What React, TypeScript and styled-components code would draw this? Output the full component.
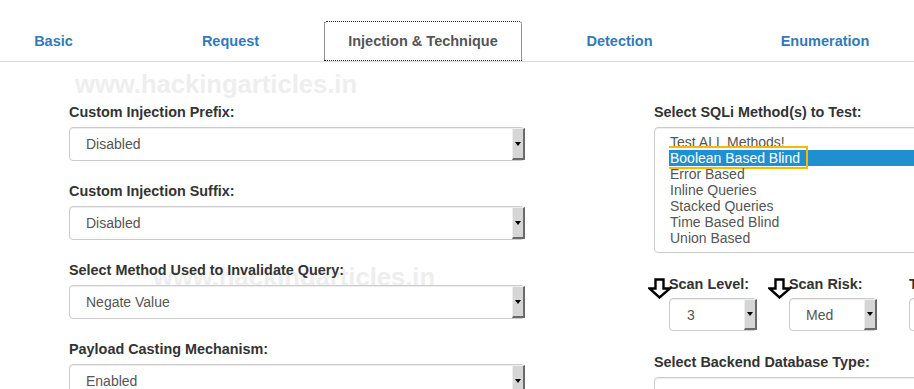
import React from 'react';
import styled, { createGlobalStyle } from 'styled-components';

const Global = createGlobalStyle`
  html, body { margin: 0; padding: 0; background: #fff; overflow: hidden; }
  body { font-family: "Liberation Sans", Arial, Helvetica, sans-serif; font-size: 14px; color: #333; }
  * { box-sizing: border-box; }
`;

const Page = styled.div`
  position: relative;
  width: 914px;
  height: 389px;
  overflow: hidden;
`;

const Watermark = styled.div<{ $x: number; $y: number }>`
  position: absolute;
  left: ${p => p.$x}px;
  top: ${p => p.$y}px;
  font-size: 25.6px;
  line-height: 26px;
  font-weight: bold;
  color: #eeeeee;
  white-space: nowrap;
  z-index: 0;
  pointer-events: none;
`;

const Nav = styled.ul`
  position: relative;
  z-index: 1;
  display: flex;
  margin: 0;
  padding: 21px 0 0;
  list-style: none;
  border-bottom: 1px solid #ddd;
  height: 62px;
`;

const Tab = styled.li<{ $w: number; $shift?: number }>`
  flex: 0 0 ${p => p.$w}px;
  display: flex;
  justify-content: center;
  padding-right: ${p => p.$shift ?? 0}px;
`;

const TabLink = styled.a<{ $active?: boolean }>`
  display: flex;
  align-items: center;
  justify-content: center;
  width: ${p => (p.$active ? '100%' : 'auto')};
  height: 40px;
  font-weight: bold;
  font-size: 14.5px;
  line-height: 20px;
  color: ${p => (p.$active ? '#555' : '#337ab7')};
  border: ${p => (p.$active ? '1px dotted #222' : '1px solid transparent')};
  border-radius: 3px 3px 0 0;
  text-decoration: none;
  white-space: nowrap;
`;

const Content = styled.div`
  position: relative;
  z-index: 1;
  display: flex;
  gap: 129px;
  padding: 40px 0 0 69px;
`;

const LeftCol = styled.div`
  flex: 0 0 456px;
`;

const RightCol = styled.div`
  flex: 0 0 320px;
`;

const Field = styled.div`
  margin-bottom: 20px;
`;

const Label = styled.label`
  display: block;
  font-weight: bold;
  font-size: 14.4px;
  line-height: 20px;
  margin-bottom: 5px;
  color: #333;
  white-space: nowrap;
`;

const SelectBox = styled.div<{ $w?: number; $h?: number }>`
  display: flex;
  width: ${p => (p.$w ? `${p.$w}px` : '100%')};
  height: ${p => p.$h ?? 34}px;
  border: 1px solid #ccc;
  border-radius: 4px;
  background: #fff;
  box-shadow: inset 0 1px 1px rgba(0, 0, 0, 0.075);
`;

const Value = styled.div<{ $pad?: number }>`
  flex: 1;
  padding-left: ${p => p.$pad ?? 16}px;
  display: flex;
  align-items: center;
  color: #555;
  font-size: 14px;
`;

const ArrowBtn = styled.div`
  flex: 0 0 13px;
  margin-right: -1px;
  display: flex;
  align-items: center;
  justify-content: center;
  background: #d6d6d6;
  border-top: 1px solid #eeeeee;
  border-left: 1px solid #eeeeee;
  border-right: 2px solid #6a6a6a;
  border-bottom: 2px solid #6a6a6a;
`;

const Caret = styled.span`
  width: 0;
  height: 0;
  border-left: 3px solid transparent;
  border-right: 3px solid transparent;
  border-top: 4px solid #000;
`;

const ListBox = styled.div`
  width: 100%;
  height: 126px;
  border: 1px solid #ccc;
  border-radius: 4px;
  box-shadow: inset 0 1px 1px rgba(0, 0, 0, 0.075);
  padding: 9px 0 0 14px;
  overflow: hidden;
`;

const ListClip = styled.div`
  height: 110px;
  overflow: hidden;
`;

const OptionList = styled.div`
  margin-top: -3px;
`;

const Option = styled.div<{ $selected?: boolean }>`
  position: relative;
  line-height: 16px;
  height: 16px;
  padding-left: 1px;
  font-size: 14px;
  white-space: nowrap;
  color: ${p => (p.$selected ? '#fff' : '#555')};
  background: ${p => (p.$selected ? '#1f8fd0' : 'transparent')};
`;

const Mark = styled.span`
  position: absolute;
  left: -2px;
  top: -4px;
  width: 141px;
  height: 23px;
  border: 2px solid #f5b900;
  pointer-events: none;
`;

const ScanRow = styled.div`
  display: flex;
  padding-left: 15px;
  margin-top: 21px;
`;

const ScanCol = styled.div`
  position: relative;
  flex: 0 0 120px;
`;

const ScanLabel = styled(Label)`
  margin-bottom: 4px;
`;

const ArrowMark = styled.svg`
  position: absolute;
  left: -21px;
  top: 4px;
`;

const BackendField = styled.div`
  margin-top: 21px;
`;

const Arrow = () => (
  <ArrowMark width="24" height="21" viewBox="0 0 24 21">
    <path
      d="M7.5 1.5 H15.5 V10.5 H22 L11.5 19.5 L1.5 10.5 H7.5 Z"
      fill="#fff"
      stroke="#000"
      strokeWidth="2.4"
      strokeLinejoin="miter"
    />
  </ArrowMark>
);

const Select = ({ value, w, h, pad }: { value: string; w?: number; h?: number; pad?: number }) => (
  <SelectBox $w={w} $h={h}>
    <Value $pad={pad}>{value}</Value>
    <ArrowBtn>
      <Caret />
    </ArrowBtn>
  </SelectBox>
);

const tabs = [
  { label: 'Basic', w: 137, shift: 30 },
  { label: 'Request', w: 187 },
  { label: 'Injection & Technique', w: 198, active: true },
  { label: 'Detection', w: 195 },
  { label: 'Enumeration', w: 216 },
];

const leftFields = [
  { label: 'Custom Injection Prefix:', value: 'Disabled' },
  { label: 'Custom Injection Suffix:', value: 'Disabled' },
  { label: 'Select Method Used to Invalidate Query:', value: 'Negate Value' },
  { label: 'Payload Casting Mechanism:', value: 'Enabled' },
];

const methods = [
  'Test ALL Methods!',
  'Boolean Based Blind',
  'Error Based',
  'Inline Queries',
  'Stacked Queries',
  'Time Based Blind',
  'Union Based',
];

export default function App() {
  return (
    <Page>
      <Global />
      <Watermark $x={75} $y={71}>www.hackingarticles.in</Watermark>
      <Watermark $x={153} $y={264}>www.hackingarticles.in</Watermark>
      <Nav>
        {tabs.map(t => (
          <Tab key={t.label} $w={t.w} $shift={t.shift}>
            <TabLink $active={t.active}>{t.label}</TabLink>
          </Tab>
        ))}
      </Nav>
      <Content>
        <LeftCol>
          {leftFields.map(f => (
            <Field key={f.label}>
              <Label>{f.label}</Label>
              <Select value={f.value} />
            </Field>
          ))}
        </LeftCol>
        <RightCol>
          <Label>Select SQLi Method(s) to Test:</Label>
          <ListBox>
            <ListClip>
              <OptionList>
                {methods.map((m, i) => (
                  <Option key={m} $selected={i === 1}>
                    {m}
                    {i === 1 && <Mark />}
                  </Option>
                ))}
              </OptionList>
            </ListClip>
          </ListBox>
          <ScanRow>
            <ScanCol>
              <Arrow />
              <ScanLabel>Scan Level:</ScanLabel>
              <Select value="3" w={88} h={33} pad={17} />
            </ScanCol>
            <ScanCol>
              <Arrow />
              <ScanLabel>Scan Risk:</ScanLabel>
              <Select value="Med" w={88} h={33} pad={16} />
            </ScanCol>
            <ScanCol>
              <ScanLabel>Threads:</ScanLabel>
              <Select value="1" w={88} h={33} pad={17} />
            </ScanCol>
          </ScanRow>
          <BackendField>
            <Label>Select Backend Database Type:</Label>
            <SelectBox>
              <Value>Any</Value>
            </SelectBox>
          </BackendField>
        </RightCol>
      </Content>
    </Page>
  );
}
